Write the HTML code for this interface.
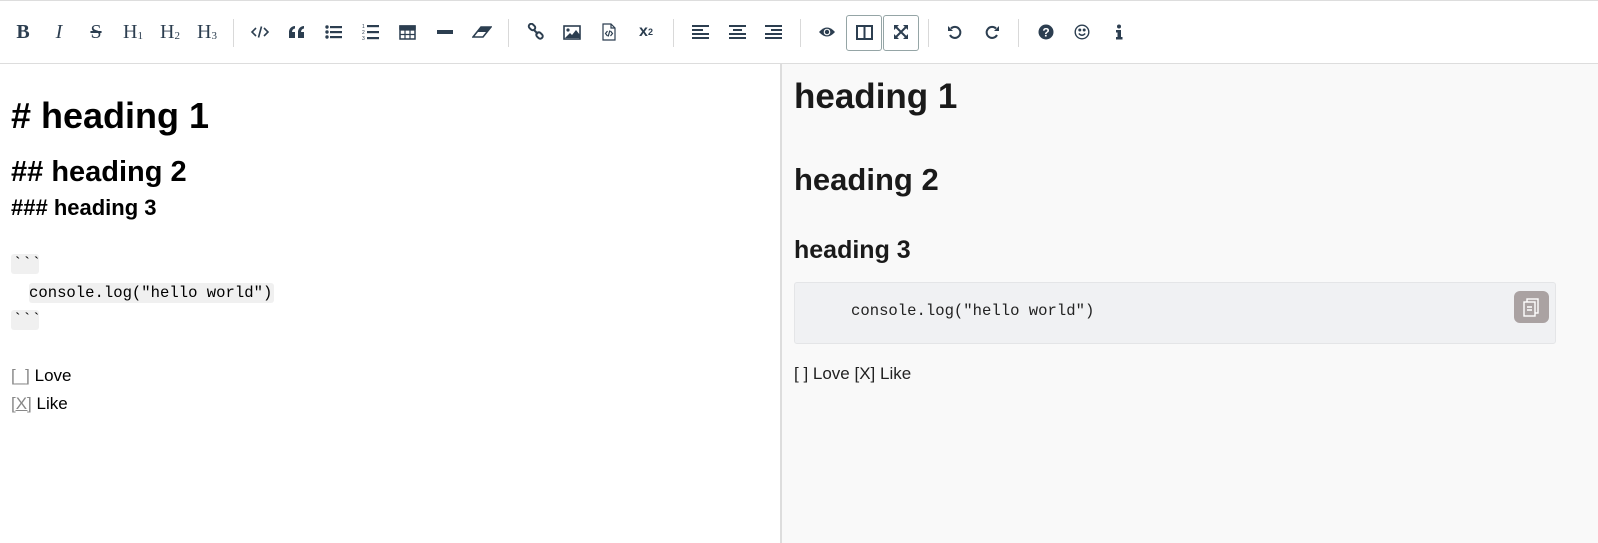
<!DOCTYPE html>
<html><head><meta charset="utf-8"><style>
*{margin:0;padding:0;box-sizing:border-box}
body{width:1598px;height:543px;overflow:hidden;background:#fff;font-family:"Liberation Sans",sans-serif;position:relative;color:#000}
.tb{position:absolute;left:0;top:0;width:1598px;height:64px;border-top:1px solid #ddd;border-bottom:1px solid #ddd;background:#fff}
.ic{position:absolute;top:20px;width:22px;height:22px;color:#2c3e50;display:flex;align-items:center;justify-content:center}
.ic svg{display:block}
.t{font-family:"Liberation Serif",serif;font-size:20px;color:#2c3e50}
.sep{position:absolute;top:18px;width:1px;height:28px;background:#d9d9d9}
.box{position:absolute;top:14px;width:36px;height:36px;border:1px solid #95a5a6;border-radius:3px}
.a{position:absolute;white-space:nowrap}
.left{position:absolute;left:0;top:64px;width:780px;height:479px}
.div{position:absolute;left:780px;top:64px;width:2px;height:479px;background:#ddd}
.right{position:absolute;left:782px;top:64px;width:816px;height:479px;background:#f9f9f9}
.b{font-weight:bold;color:#000}
.mono{font-family:"Liberation Mono","DejaVu Sans Mono",monospace;font-size:15.6px}
.cb{background:#f0f0f0;border-radius:3px}
</style></head><body>
<div class="tb">
<div class="ic t" style="left:12px;font-weight:bold">B</div>
<div class="ic t" style="left:48px;font-style:italic">I</div>
<div class="ic t" style="left:85px;text-decoration:line-through">S</div>
<div class="ic t" style="left:120px;width:26px">H<span style="font-size:11px;margin-top:8px">1</span></div>
<div class="ic t" style="left:157px;width:26px">H<span style="font-size:11px;margin-top:8px">2</span></div>
<div class="ic t" style="left:194px;width:26px">H<span style="font-size:11px;margin-top:8px">3</span></div>
<div class="sep" style="left:233px"></div>
<div class="ic" style="left:249px"><svg width="20" height="14" viewBox="0 0 20 14" fill="none" stroke="#2c3e50" stroke-width="1.6"><path d="M6 3L2 7l4 4M14 3l4 4-4 4M11.5 1.5L8.5 12.5"/></svg></div>
<div class="ic" style="left:286px"><svg width="18" height="14" viewBox="0 0 18 14" fill="#2c3e50"><path d="M1 7a6 6 0 0 1 6-6v2.5a3.5 3.5 0 0 0-3 3.5h3v6H1zM10 7a6 6 0 0 1 6-6v2.5a3.5 3.5 0 0 0-3 3.5h3v6h-6z"/></svg></div>
<div class="ic" style="left:323px"><svg width="18" height="14" viewBox="0 0 18 14" fill="#2c3e50"><circle cx="2" cy="2" r="1.7"/><circle cx="2" cy="7" r="1.7"/><circle cx="2" cy="12" r="1.7"/><rect x="5" y="1" width="12" height="2.2"/><rect x="5" y="6" width="12" height="2.2"/><rect x="5" y="11" width="12" height="2.2"/></svg></div>
<div class="ic" style="left:360px"><svg width="18" height="18" viewBox="0 0 18 18" fill="#2c3e50"><text x="0" y="5" font-size="5" font-family="Liberation Sans">1</text><text x="0" y="11" font-size="5" font-family="Liberation Sans">2</text><text x="0" y="17" font-size="5" font-family="Liberation Sans">3</text><rect x="5" y="2" width="12" height="2.2"/><rect x="5" y="8" width="12" height="2.2"/><rect x="5" y="14" width="12" height="2.2"/></svg></div>
<div class="ic" style="left:396px"><svg width="17" height="15" viewBox="0 0 17 15" fill="none" stroke="#2c3e50" stroke-width="1.5"><rect x="1" y="1" width="15" height="13"/><path d="M1 5h15M1 9.5h15M6 1v13M11 1v13" stroke-width="1.2"/><rect x="1" y="1" width="15" height="3" fill="#2c3e50"/></svg></div>
<div class="ic" style="left:434px"><svg width="16" height="6"><rect x="0" y="1" width="16" height="4" fill="#2c3e50"/></svg></div>
<div class="ic" style="left:471px"><svg width="20" height="14" viewBox="0 0 20 14"><path d="M1 12L9 2h10l-8 10z" fill="none" stroke="#2c3e50" stroke-width="1.6"/><path d="M9 2h10l-4 5H5z" fill="#2c3e50"/></svg></div>
<div class="sep" style="left:508px"></div>
<div class="ic" style="left:525px"><svg width="18" height="18" viewBox="0 0 18 18" fill="none" stroke="#2c3e50" stroke-width="2"><rect x="1.5" y="1.5" width="7" height="5" rx="2.5" transform="rotate(45 5 4)"/><rect x="9" y="10" width="7" height="5" rx="2.5" transform="rotate(45 12.5 12.5)"/><path d="M7 7l4 4"/></svg></div>
<div class="ic" style="left:561px"><svg width="18" height="15" viewBox="0 0 18 15"><rect x="1" y="1" width="16" height="13" fill="none" stroke="#2c3e50" stroke-width="1.6"/><circle cx="5" cy="5" r="1.6" fill="#2c3e50"/><path d="M2 13l5-5 2 2 4-5 4 5v3z" fill="#2c3e50"/></svg></div>
<div class="ic" style="left:598px"><svg width="14" height="18" viewBox="0 0 14 18" fill="none" stroke="#2c3e50" stroke-width="1.2"><path d="M1 1h8l4 4v12H1z"/><path d="M9 1v4h4M5.5 8l-2 2.5 2 2.5M8.5 8l2 2.5-2 2.5M7.8 7.5l-1.6 6"/></svg></div>
<div class="ic" style="left:635px;font-weight:bold;font-size:16px;color:#2c3e50">x<sup style="font-size:9px">2</sup></div>
<div class="sep" style="left:673px"></div>
<div class="ic" style="left:689px"><svg width="17" height="14" fill="#2c3e50"><rect x="0" y="0" width="17" height="2"/><rect x="0" y="4" width="11" height="2"/><rect x="0" y="8" width="17" height="2"/><rect x="0" y="12" width="17" height="2"/></svg></div>
<div class="ic" style="left:726px"><svg width="17" height="14" fill="#2c3e50"><rect x="0" y="0" width="17" height="2"/><rect x="4" y="4" width="9" height="2"/><rect x="0" y="8" width="17" height="2"/><rect x="0" y="12" width="17" height="2"/></svg></div>
<div class="ic" style="left:762px"><svg width="17" height="14" fill="#2c3e50"><rect x="0" y="0" width="17" height="2"/><rect x="6" y="4" width="11" height="2"/><rect x="0" y="8" width="17" height="2"/><rect x="0" y="12" width="17" height="2"/></svg></div>
<div class="sep" style="left:800px"></div>
<div class="ic" style="left:816px"><svg width="18" height="12" viewBox="0 0 18 12"><path d="M1 6Q9 -3 17 6Q9 15 1 6z" fill="#2c3e50"/><circle cx="9" cy="6" r="3.3" fill="#fff"/><circle cx="9" cy="6" r="2.2" fill="#2c3e50"/></svg></div>
<div class="box" style="left:846px"></div>
<div class="ic" style="left:853px"><svg width="17" height="15"><rect x="1" y="1" width="15" height="13" fill="none" stroke="#2c3e50" stroke-width="2"/><rect x="7.5" y="1" width="2" height="13" fill="#2c3e50"/></svg></div>
<div class="box" style="left:883px"></div>
<div class="ic" style="left:890px"><svg width="16" height="16" viewBox="0 0 16 16" fill="#2c3e50" stroke="#2c3e50" stroke-width="2"><path d="M3 3l10 10M13 3L3 13"/><path d="M1 1h5L1 6zM15 1v5l-5-5zM1 15v-5l5 5zM15 15h-5l5-5z" stroke="none"/></svg></div>
<div class="sep" style="left:928px"></div>
<div class="ic" style="left:944px"><svg width="16" height="16" viewBox="0 0 16 16" fill="none" stroke="#2c3e50" stroke-width="2"><path d="M4 4.5A5.5 5.5 0 1 1 3 11"/><path d="M1 2v5h5z" fill="#2c3e50" stroke="none"/></svg></div>
<div class="ic" style="left:981px"><svg width="16" height="16" viewBox="0 0 16 16" fill="none" stroke="#2c3e50" stroke-width="2"><path d="M12 4.5A5.5 5.5 0 1 0 13 11"/><path d="M15 2v5h-5z" fill="#2c3e50" stroke="none"/></svg></div>
<div class="sep" style="left:1018px"></div>
<div class="ic" style="left:1035px"><svg width="16" height="16"><circle cx="8" cy="8" r="7.5" fill="#2c3e50"/><text x="8" y="12.5" text-anchor="middle" font-size="12" font-weight="bold" fill="#fff" font-family="Liberation Sans">?</text></svg></div>
<div class="ic" style="left:1071px"><svg width="16" height="16" fill="none" stroke="#2c3e50" stroke-width="1.4"><circle cx="8" cy="8" r="6.8"/><path d="M4.8 9.5Q8 13 11.2 9.5"/><circle cx="5.8" cy="6" r=".8" fill="#2c3e50"/><circle cx="10.2" cy="6" r=".8" fill="#2c3e50"/></svg></div>
<div class="ic" style="left:1108px"><svg width="8" height="16" fill="#2c3e50"><circle cx="4" cy="2.5" r="2"/><path d="M1 6h5v7h1.5v2.5h-6.5V13h1.5V8.5H1z"/></svg></div>
</div>

<div class="left">
<div class="a b" style="left:11px;top:31px;font-size:36px">#&nbsp;heading 1</div>
<div class="a b" style="left:11px;top:92px;font-size:29px">## heading 2</div>
<div class="a b" style="left:11px;top:131px;font-size:22px">### heading 3</div>
<div class="a mono cb" style="left:11px;top:190px;width:28px;height:20px;line-height:20px;padding-left:2px">&#96;&#96;&#96;</div>
<div class="a mono cb" style="left:29px;top:219px;height:20px;line-height:20px;padding-right:2px">console.log("hello world")</div>
<div class="a mono cb" style="left:11px;top:246px;width:28px;height:20px;line-height:20px;padding-left:2px">&#96;&#96;&#96;</div>
<div class="a" style="left:11px;top:302px;font-size:17px"><span style="color:#888">[_]</span> Love</div>
<div class="a" style="left:11px;top:330px;font-size:17px"><span style="color:#888;text-decoration:underline">[X]</span> Like</div>
</div>
<div class="div"></div>
<div class="right">
<div class="a b" style="left:12px;top:13px;font-size:35px;color:#1a1a1a">heading 1</div>
<div class="a b" style="left:12px;top:98px;font-size:31px;color:#1a1a1a">heading 2</div>
<div class="a b" style="left:12px;top:172px;font-size:25px;color:#1a1a1a">heading 3</div>
<div class="a" style="left:12px;top:218px;width:762px;height:62px;background:#f0f1f3;border:1px solid #e4e5e7;border-radius:3px">
<div class="a mono" style="left:56px;top:19px;font-size:15.6px;color:#222">console.log("hello world")</div>
<div class="a" style="left:719px;top:8px;width:35px;height:32px;background:#aaa2a2;border-radius:6px">
<svg width="35" height="32" viewBox="0 0 35 32" fill="none" stroke="#fff" stroke-width="1.4"><rect x="13" y="8" width="11" height="14"/><rect x="10" y="11" width="11" height="14" fill="#aaa2a2"/><path d="M13 16h5M13 19h5"/></svg></div>
</div>
<div class="a" style="left:12px;top:300px;font-size:17px;color:#222">[ ] Love [X] Like</div>
</div>
</body></html>
